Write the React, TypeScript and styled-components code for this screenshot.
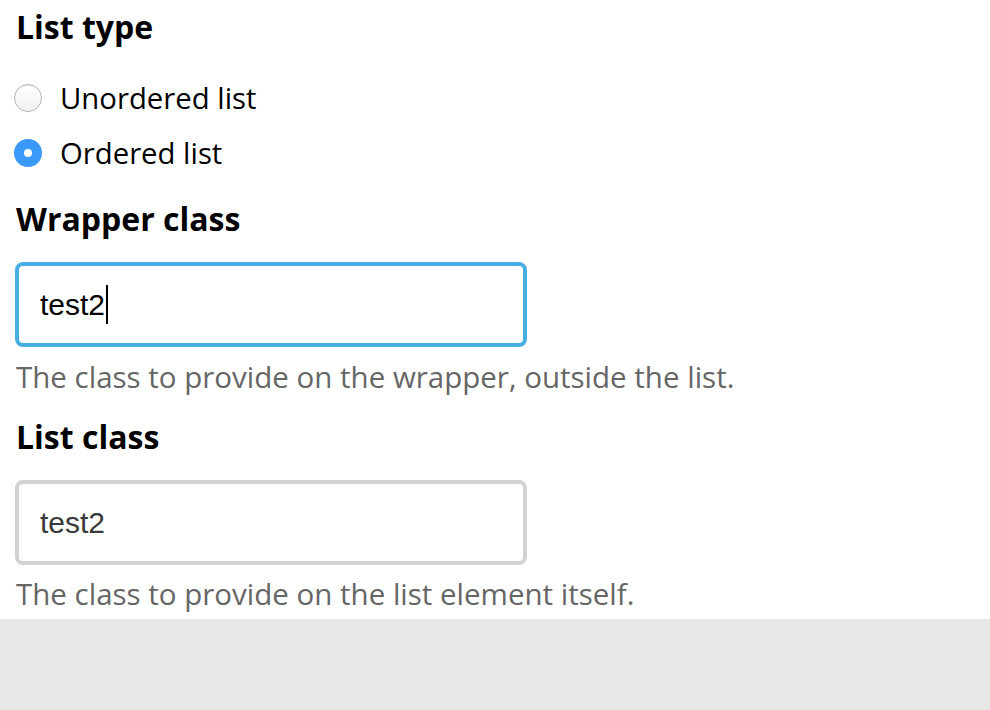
import * as React from 'react'
import styled, { createGlobalStyle, css } from 'styled-components'

const GlobalStyle = createGlobalStyle`
	html, body {
		margin: 0;
		padding: 0;
		background: #e7e7e7;
	}
	body {
		font-family: "Open Sans", "Noto Sans", sans-serif;
	}
`

const Page = styled.div`
	min-height: 100vh;
	background: #e7e7e7;
`

const Form = styled.div`
	display: flex;
	flex-direction: column;
	background: #fff;
	padding: 9px 16px 7px;
`

const Heading = styled.div<{ gap?: number }>`
	font-size: 32px;
	font-weight: 700;
	line-height: 36px;
	color: #000;
	margin-top: ${ props => props.gap || 0 }px;
`

const RadioList = styled.div`
	display: flex;
	flex-direction: column;
	gap: 15px;
	margin-top: 33px;
`

const RadioRow = styled.label`
	display: flex;
	align-items: center;
	gap: 18px;
	height: 40px;
	font-size: 29.3px;
	color: #000;
`

const RadioMark = styled.span<{ checked?: boolean }>`
	position: relative;
	display: block;
	width: 28px;
	height: 28px;
	margin-left: -2px;
	border-radius: 50%;
	box-sizing: border-box;
	${ props => props.checked ? css`
		background: #3b99fc;
		&::after {
			content: '';
			position: absolute;
			left: 10px;
			top: 10px;
			width: 8px;
			height: 8px;
			border-radius: 50%;
			background: #fff;
		}
	` : css`
		border: 1.5px solid #b3b3b3;
		background: linear-gradient(#fff, #f2f2f2);
		box-shadow: inset 0 1px 1px rgba(0, 0, 0, .06);
	` }
`

const FieldBox = styled.div<{ focused?: boolean }>`
	display: flex;
	align-items: center;
	box-sizing: border-box;
	width: 512px;
	height: 85px;
	margin: 25px 0 0 -1px;
	padding-left: 21px;
	border-radius: 8px;
	background: #fff;
	font-family: "Liberation Sans", Arial, sans-serif;
	font-size: 30px;
	${ props => props.focused ? css`
		border: 4px solid #47aee4;
		color: #000;
	` : css`
		border: 4px solid #d2d2d2;
		color: #3a3a3a;
	` }
`

const Caret = styled.span`
	display: inline-block;
	width: 2px;
	height: 39px;
	margin-left: 1px;
	background: #000;
`

const Description = styled.div<{ gap: number }>`
	font-size: 29.5px;
	line-height: 36px;
	color: #666;
	margin-top: ${ props => props.gap }px;
`

const Footer = styled.div`
	background: #e7e7e7;
`

export default function App() {
	return (
		<Page>
			<GlobalStyle />
			<Form>
				<Heading>List type</Heading>
				<RadioList>
					<RadioRow>
						<RadioMark />
						Unordered list
					</RadioRow>
					<RadioRow>
						<RadioMark checked />
						Ordered list
					</RadioRow>
				</RadioList>

				<Heading gap={ 28 }>Wrapper class</Heading>
				<FieldBox focused role='textbox'>
					test2<Caret />
				</FieldBox>
				<Description gap={ 12 }>The class to provide on the wrapper, outside the list.</Description>

				<Heading gap={ 24 }>List class</Heading>
				<FieldBox role='textbox'>test2</FieldBox>
				<Description gap={ 11 }>The class to provide on the list element itself.</Description>
			</Form>
			<Footer />
		</Page>
	)
}
